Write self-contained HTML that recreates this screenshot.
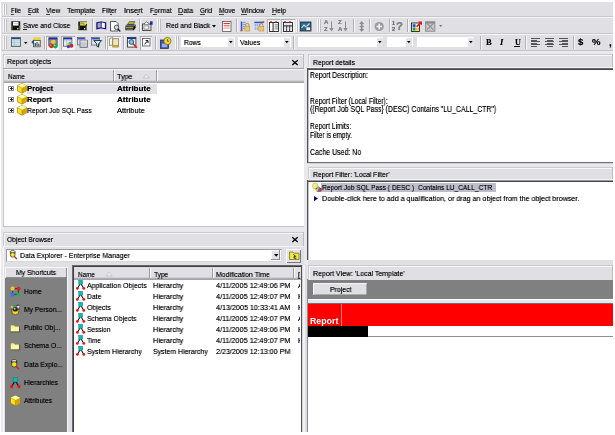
<!DOCTYPE html>
<html><head><meta charset="utf-8"><title>Report Editor</title>
<style>
html,body{margin:0;padding:0;}
body{width:615px;height:435px;overflow:hidden;background:#fff;position:relative;font-family:"Liberation Sans", sans-serif;}
#app{position:absolute;left:0;top:0;width:615px;height:435px;overflow:hidden;}
#app div,#app svg,#app span{position:absolute;}
#app span.t,#app span.u{white-space:pre;will-change:transform;text-shadow:0 0 0.5px rgba(0,0,0,0.6);}
#app svg{overflow:visible;}
</style></head><body><div id="app">
<div style="left:1px;top:2px;width:612px;height:430px;background:#e0dfe3;"></div>
<div style="left:1px;top:51px;width:2px;height:381px;background:#e9e8ed;"></div>
<div style="left:2px;top:16px;width:611px;height:1px;background:#c9c8cc;"></div>
<div style="left:2px;top:17px;width:611px;height:1px;background:#f4f4f6;"></div>
<div style="left:2px;top:33px;width:611px;height:1px;background:#c9c8cc;"></div>
<div style="left:2px;top:34px;width:611px;height:1px;background:#f4f4f6;"></div>
<div style="left:2px;top:50px;width:611px;height:1px;background:#c4c3c7;"></div>
<div style="left:2px;top:51px;width:611px;height:3px;background:#e9e8ed;"></div>
<div style="left:3px;top:4px;width:1px;height:11px;background:#fafafc;"></div>
<div style="left:4px;top:4px;width:1px;height:11px;background:#c0bfc4;"></div>
<div style="left:5px;top:4px;width:1px;height:11px;background:#fafafc;"></div>
<div style="left:6px;top:4px;width:1px;height:11px;background:#c0bfc4;"></div>
<div style="left:3px;top:19px;width:1px;height:13px;background:#fafafc;"></div>
<div style="left:4px;top:19px;width:1px;height:13px;background:#c0bfc4;"></div>
<div style="left:5px;top:19px;width:1px;height:13px;background:#fafafc;"></div>
<div style="left:6px;top:19px;width:1px;height:13px;background:#c0bfc4;"></div>
<div style="left:3px;top:36px;width:1px;height:13px;background:#fafafc;"></div>
<div style="left:4px;top:36px;width:1px;height:13px;background:#c0bfc4;"></div>
<div style="left:5px;top:36px;width:1px;height:13px;background:#fafafc;"></div>
<div style="left:6px;top:36px;width:1px;height:13px;background:#c0bfc4;"></div>
<span class="t" style="left:11px;top:6.00px;font-size:7.5px;line-height:10.5px;color:#000;transform:scaleX(0.8103);transform-origin:0 50%;">File</span>
<span class="t" style="left:28px;top:6.00px;font-size:7.5px;line-height:10.5px;color:#000;transform:scaleX(0.8502);transform-origin:0 50%;">Edit</span>
<span class="t" style="left:46.2px;top:6.00px;font-size:7.5px;line-height:10.5px;color:#000;transform:scaleX(0.8868);transform-origin:0 50%;">View</span>
<span class="t" style="left:67.2px;top:6.00px;font-size:7.5px;line-height:10.5px;color:#000;transform:scaleX(0.9298);transform-origin:0 50%;">Template</span>
<span class="t" style="left:102.2px;top:6.00px;font-size:7.5px;line-height:10.5px;color:#000;transform:scaleX(0.8757);transform-origin:0 50%;">Filter</span>
<span class="t" style="left:124.2px;top:6.00px;font-size:7.5px;line-height:10.5px;color:#000;transform:scaleX(0.9912);transform-origin:0 50%;">Insert</span>
<span class="t" style="left:149.5px;top:6.00px;font-size:7.5px;line-height:10.5px;color:#000;transform:scaleX(0.9173);transform-origin:0 50%;">Format</span>
<span class="t" style="left:178.4px;top:6.00px;font-size:7.5px;line-height:10.5px;color:#000;transform:scaleX(0.9531);transform-origin:0 50%;">Data</span>
<span class="t" style="left:200px;top:6.00px;font-size:7.5px;line-height:10.5px;color:#000;transform:scaleX(0.8467);transform-origin:0 50%;">Grid</span>
<span class="t" style="left:218.8px;top:6.00px;font-size:7.5px;line-height:10.5px;color:#000;transform:scaleX(0.8777);transform-origin:0 50%;">Move</span>
<span class="t" style="left:241.4px;top:6.00px;font-size:7.5px;line-height:10.5px;color:#000;transform:scaleX(0.8843);transform-origin:0 50%;">Window</span>
<span class="t" style="left:271.7px;top:6.00px;font-size:7.5px;line-height:10.5px;color:#000;transform:scaleX(0.9134);transform-origin:0 50%;">Help</span>
<div style="left:11px;top:13.6px;width:3px;height:0.7px;background:#444;"></div>
<div style="left:28px;top:13.6px;width:3.3px;height:0.7px;background:#444;"></div>
<div style="left:46.2px;top:13.6px;width:4px;height:0.7px;background:#444;"></div>
<div style="left:84.5px;top:13.6px;width:1.5px;height:0.7px;background:#444;"></div>
<div style="left:109.5px;top:13.6px;width:2px;height:0.7px;background:#444;"></div>
<div style="left:136.5px;top:13.6px;width:2px;height:0.7px;background:#444;"></div>
<div style="left:153px;top:13.6px;width:3.5px;height:0.7px;background:#444;"></div>
<div style="left:178.4px;top:13.6px;width:4.5px;height:0.7px;background:#444;"></div>
<div style="left:200px;top:13.6px;width:4.5px;height:0.7px;background:#444;"></div>
<div style="left:218.8px;top:13.6px;width:5px;height:0.7px;background:#444;"></div>
<div style="left:241.4px;top:13.6px;width:6px;height:0.7px;background:#444;"></div>
<div style="left:271.7px;top:13.6px;width:4.5px;height:0.7px;background:#444;"></div>
<svg style="left:10.5px;top:21px;" width="9.5" height="9.5" viewBox="0 0 9.5 9.5"><rect x="0.3" y="0.3" width="8.9" height="8.9" fill="#111"/><rect x="0.3" y="4.4" width="1.2" height="4.2" fill="#6a6a20"/><rect x="8" y="4.4" width="1.2" height="4.2" fill="#6a6a20"/><rect x="1.9" y="0.9" width="5.6" height="3.7" fill="#f4f4f8"/><rect x="2.4" y="2.2" width="4.6" height="0.6" fill="#c0c0c8"/><rect x="6.2" y="7" width="1.2" height="1.4" fill="#f0f0f0"/></svg>
<span class="t" style="left:23px;top:21.00px;font-size:7.5px;line-height:10.5px;color:#000;transform:scaleX(0.8932);transform-origin:0 50%;">Save and Close</span>
<div style="left:23px;top:29.4px;width:4px;height:0.8px;background:#222;"></div>
<svg style="left:78px;top:21px;" width="10" height="9.5" viewBox="0 0 10 9.5"><rect x="0.3" y="0.6" width="8.7" height="8.6" fill="#111"/><rect x="0.3" y="4.4" width="1.2" height="4.2" fill="#7a7a20"/><rect x="7.8" y="4.4" width="1.2" height="4.2" fill="#7a7a20"/><rect x="1.9" y="1.1" width="5.4" height="3.5" fill="#c8c858"/><rect x="2.4" y="2.4" width="4.4" height="0.6" fill="#8a8a30"/><rect x="6" y="7" width="1.2" height="1.4" fill="#f0f0f0"/><path d="M6.4 0L7.6 1.4L9.8 0.4L8.6 2.2L10 3.6L8 3L7 4.4L7 2.6L5.4 1.8L7 1.6z" fill="#fff04a"/></svg>
<div style="left:92px;top:19px;width:1px;height:13px;background:#b0afb4;"></div>
<div style="left:93px;top:19px;width:1px;height:13px;background:#f8f8fa;"></div>
<svg style="left:96px;top:21px;" width="10.5" height="9" viewBox="0 0 10.5 9"><path d="M0.3 1.2L4.8 0.5L5.4 0.5L10.2 1.2L10.2 8.4L5.4 7.6L4.8 7.6L0.3 8.4z" fill="#0c0c8c"/><path d="M1.6 2L4.7 1.5V6.6L1.6 7z" fill="#a9a9ad"/><path d="M8.9 2L5.6 1.5V6.6L8.9 7z" fill="#fafaff"/></svg>
<svg style="left:110px;top:20.5px;" width="11" height="11" viewBox="0 0 11 11"><path d="M0.5 0.5h5.5l2 2v7.5h-7.5z" fill="#fff" stroke="#333" stroke-width="0.8"/><circle cx="6.5" cy="6.3" r="2.2" fill="#bfe6ee" stroke="#333" stroke-width="0.8"/><path d="M8 8L10.3 10.5" stroke="#222" stroke-width="1.3"/></svg>
<svg style="left:124.5px;top:21px;" width="11" height="10" viewBox="0 0 11 10"><path d="M2.6 3.4L4.4 0.6H9.8L8.4 3.4z" fill="#b8b838" stroke="#333" stroke-width="0.6"/><path d="M0.4 4.8L2 3.4H10.6L10.6 7L8.8 9.2H0.4z" fill="#161616"/><path d="M0.6 4.9H8.8L10.4 3.6" stroke="#d8d8dc" stroke-width="0.7" fill="none"/><rect x="1" y="6.2" width="7.2" height="1.1" fill="#c8c850"/><rect x="1.4" y="8.2" width="6.4" height="0.8" fill="#808084"/></svg>
<div style="left:138.5px;top:19px;width:1px;height:13px;background:#b0afb4;"></div>
<div style="left:139.5px;top:19px;width:1px;height:13px;background:#f8f8fa;"></div>
<svg style="left:142px;top:21px;" width="11" height="10" viewBox="0 0 11 10"><rect x="0.5" y="3" width="8.5" height="6.5" fill="#d9d9de" stroke="#333" stroke-width="0.8"/><path d="M2 3L4.5 0.8L7.5 3" fill="#fff" stroke="#333" stroke-width="0.7"/><rect x="2" y="5" width="4.8" height="3" fill="#fff" stroke="#555" stroke-width="0.5"/><rect x="8" y="0.3" width="2.6" height="3.4" fill="#1c2ea8"/></svg>
<div style="left:157px;top:19px;width:1px;height:13px;background:#fafafc;"></div>
<div style="left:158px;top:19px;width:1px;height:13px;background:#c0bfc4;"></div>
<div style="left:159px;top:19px;width:1px;height:13px;background:#fafafc;"></div>
<div style="left:160px;top:19px;width:1px;height:13px;background:#c0bfc4;"></div>
<span class="t" style="left:166.3px;top:21.00px;font-size:7.5px;line-height:10.5px;color:#000;transform:scaleX(0.9040);transform-origin:0 50%;">Red and Black</span>
<svg style="left:211.5px;top:24.5px;" width="4" height="3" viewBox="0 0 4 3"><path d="M0 0h4l-2 2.4z" fill="#000"/></svg>
<svg style="left:222px;top:20.5px;" width="9.5" height="11" viewBox="0 0 9.5 11"><rect x="0.5" y="0.5" width="8.5" height="10" fill="#fff" stroke="#55555a" stroke-width="0.8"/><rect x="1.6" y="2" width="6.2" height="1.1" fill="#e03030"/><rect x="1.6" y="4.4" width="6.2" height="0.9" fill="#e03030"/><rect x="1.6" y="6.6" width="6.2" height="0.9" fill="#f08080"/></svg>
<div style="left:235.5px;top:19px;width:1px;height:13px;background:#b0afb4;"></div>
<div style="left:236.5px;top:19px;width:1px;height:13px;background:#f8f8fa;"></div>
<svg style="left:240px;top:20.5px;" width="10.5" height="11" viewBox="0 0 10.5 11"><rect x="0.8" y="0.6" width="1.5" height="9.4" fill="#2a50d0"/><path d="M3 1.4H5.6M3 3.4H5.6M3 5.4H4.6M3 7.4H4.4" stroke="#6a8ae0" stroke-width="0.9"/><rect x="0.6" y="9" width="1.6" height="1.4" fill="#d03030"/><path d="M5.7 5.4V3.9a1.6 1.6 0 0 1 3.2 0V5.4" fill="none" stroke="#a08840" stroke-width="0.9"/><rect x="4.8" y="5.2" width="5" height="4.8" fill="#ecc868" stroke="#a08840" stroke-width="0.5"/></svg>
<svg style="left:254px;top:20.5px;" width="10.5" height="11" viewBox="0 0 10.5 11"><rect x="0.3" y="0.7" width="9.2" height="1.5" fill="#2a50d0"/><path d="M1.2 3V5.4M3.2 3V5.4M5.2 3V4.4M1.2 6.4V8.6M3.2 6.4V8.6" stroke="#6a8ae0" stroke-width="0.9"/><rect x="8.6" y="0.4" width="1.6" height="1.4" fill="#d03030"/><path d="M5.7 5.6V4.3a1.6 1.6 0 0 1 3.2 0V5.6" fill="none" stroke="#a08840" stroke-width="0.9"/><rect x="4.8" y="5.4" width="5" height="4.6" fill="#ecc868" stroke="#a08840" stroke-width="0.5"/></svg>
<div style="left:266.5px;top:19px;width:13.5px;height:13.5px;background:#f2f2f5;box-shadow:inset 0.7px 0.7px 0 #9a9a9f;"></div>
<svg style="left:268.5px;top:20.5px;" width="10" height="11" viewBox="0 0 10 11"><rect x="0.5" y="1.5" width="9" height="9" fill="#fff" stroke="#222" stroke-width="0.9"/><rect x="3.6" y="1.5" width="1" height="9" fill="#222"/><rect x="5.6" y="3.5" width="3.6" height="0.8" fill="#555"/><rect x="5.6" y="5.5" width="3.6" height="0.8" fill="#555"/><rect x="5.6" y="7.5" width="3.6" height="0.8" fill="#555"/><path d="M1 0L3 0L2 1.4zM6 0L8 0L7 1.4z" fill="#d02020"/></svg>
<div style="left:281px;top:19px;width:13.5px;height:13.5px;background:#f2f2f5;box-shadow:inset 0.7px 0.7px 0 #9a9a9f;"></div>
<svg style="left:282.5px;top:20.5px;" width="10" height="11" viewBox="0 0 10 11"><rect x="0.5" y="1.5" width="9" height="9" fill="#e8e8ec" stroke="#222" stroke-width="0.9"/><rect x="0.5" y="4.4" width="9" height="1" fill="#222"/><rect x="3.3" y="4.4" width="0.8" height="6" fill="#222"/><rect x="6.3" y="4.4" width="0.8" height="6" fill="#222"/><path d="M1 0L3 0L2 1.4zM6 0L8 0L7 1.4z" fill="#d02020"/></svg>
<div style="left:296px;top:19px;width:1px;height:13px;background:#fafafc;"></div>
<div style="left:297px;top:19px;width:1px;height:13px;background:#c0bfc4;"></div>
<div style="left:298px;top:19px;width:1px;height:13px;background:#fafafc;"></div>
<div style="left:299px;top:19px;width:1px;height:13px;background:#c0bfc4;"></div>
<svg style="left:300px;top:20.5px;" width="11.5" height="11" viewBox="0 0 11.5 11"><rect x="0.5" y="1" width="10.5" height="9" fill="#2c6a8a" stroke="#223" stroke-width="0.8"/><path d="M1.5 7L4 4L6 6L9.5 2.5" stroke="#bfeaf0" stroke-width="1.1" fill="none"/><rect x="6" y="6" width="4.4" height="3.4" fill="#e8f4ff" stroke="#223" stroke-width="0.5"/></svg>
<div style="left:317px;top:19px;width:1px;height:13px;background:#fafafc;"></div>
<div style="left:318px;top:19px;width:1px;height:13px;background:#c0bfc4;"></div>
<div style="left:319px;top:19px;width:1px;height:13px;background:#fafafc;"></div>
<div style="left:320px;top:19px;width:1px;height:13px;background:#c0bfc4;"></div>
<span class="u" style="left:323.5px;top:19.3px;font-size:6px;line-height:6px;color:#8a8a90;font-weight:bold;">A</span>
<span class="u" style="left:323.5px;top:25.5px;font-size:6px;line-height:6px;color:#8a8a90;font-weight:bold;">Z</span>
<svg style="left:329.0px;top:20.5px;" width="5" height="11" viewBox="0 0 5 11"><path d="M2.5 0.5V8" stroke="#8a8a90" stroke-width="1"/><path d="M0.3 7L4.7 7L2.5 10.5z" fill="#8a8a90"/></svg>
<span class="u" style="left:337.8px;top:19.3px;font-size:6px;line-height:6px;color:#8a8a90;font-weight:bold;">Z</span>
<span class="u" style="left:337.8px;top:25.5px;font-size:6px;line-height:6px;color:#8a8a90;font-weight:bold;">A</span>
<svg style="left:343.3px;top:20.5px;" width="5" height="11" viewBox="0 0 5 11"><path d="M2.5 0.5V8" stroke="#8a8a90" stroke-width="1"/><path d="M0.3 7L4.7 7L2.5 10.5z" fill="#8a8a90"/></svg>
<div style="left:353px;top:19px;width:1px;height:13px;background:#b0afb4;"></div>
<div style="left:354px;top:19px;width:1px;height:13px;background:#f8f8fa;"></div>
<svg style="left:358.5px;top:20.5px;" width="5.5" height="11" viewBox="0 0 5.5 11"><path d="M2.7 0L5.2 3H0.2zM2.7 11L5.2 8H0.2z" fill="#8a8a90"/><rect x="1.9" y="2.5" width="1.6" height="6" fill="#8a8a90"/><rect x="0.6" y="4.9" width="4.2" height="1.2" fill="#8a8a90"/></svg>
<div style="left:369px;top:19px;width:1px;height:13px;background:#b0afb4;"></div>
<div style="left:370px;top:19px;width:1px;height:13px;background:#f8f8fa;"></div>
<svg style="left:374px;top:20.5px;" width="10.5" height="11" viewBox="0 0 10.5 11"><circle cx="5.2" cy="5.5" r="4.6" fill="#9a9aa0"/><rect x="2.4" y="4.7" width="5.6" height="1.6" fill="#f0f0f4"/><rect x="4.4" y="2.7" width="1.6" height="5.6" fill="#f0f0f4"/></svg>
<div style="left:388.5px;top:19px;width:1px;height:13px;background:#b0afb4;"></div>
<div style="left:389.5px;top:19px;width:1px;height:13px;background:#f8f8fa;"></div>
<span class="u" style="left:391.7px;top:19.7px;font-size:5.6px;line-height:6px;color:#77777d;font-weight:bold;">1</span>
<span class="u" style="left:391.7px;top:25.5px;font-size:5.6px;line-height:6px;color:#77777d;font-weight:bold;">2</span>
<span class="u" style="left:395.7px;top:20.0px;font-size:11.5px;line-height:12px;color:#8a8a90;font-weight:bold;">?</span>
<div style="left:406.5px;top:19px;width:1px;height:13px;background:#b0afb4;"></div>
<div style="left:407.5px;top:19px;width:1px;height:13px;background:#f8f8fa;"></div>
<svg style="left:410.5px;top:20.5px;" width="11" height="11" viewBox="0 0 11 11"><rect x="0.5" y="2" width="8" height="8.5" fill="#fff" stroke="#222" stroke-width="0.9"/><rect x="1.6" y="3.2" width="3" height="3" fill="#2a50d0"/><rect x="1.6" y="6.6" width="3" height="3" fill="#18a040"/><rect x="4.8" y="6.6" width="3" height="3" fill="#e8c020"/><path d="M5 5L8.5 1.8L7 0.5H11V4.4L9.8 3.1L6.2 6.2z" fill="#e01818"/></svg>
<svg style="left:425px;top:20.5px;" width="10.5" height="11" viewBox="0 0 10.5 11"><rect x="0.6" y="0.8" width="9.2" height="9.4" fill="#c9c9ce" stroke="#8a8a90" stroke-width="1"/><path d="M2 2.4L8.4 8.6M8.4 2.4L2 8.6" stroke="#8a8a90" stroke-width="1.1"/><rect x="0.6" y="0.8" width="9.2" height="1.8" fill="#8a8a90"/></svg>
<svg style="left:439px;top:25px;" width="3.4" height="2.4" viewBox="0 0 3.4 2.4"><path d="M0 0h3.4l-1.7 2z" fill="#77777c"/></svg>
<svg style="left:10.5px;top:37px;" width="10" height="10" viewBox="0 0 10 10"><rect x="0.5" y="0.5" width="9" height="9" fill="#e4f4f4" stroke="#5a626c" stroke-width="0.9"/><rect x="0.9" y="0.9" width="8.2" height="1.3" fill="#2a3a98"/><path d="M1 3.8H9M1 5.4H9M1 7H9M1 8.4H9" stroke="#8ab4c0" stroke-width="0.6"/><path d="M3.2 2.5V9.2" stroke="#8ab4c0" stroke-width="0.5"/></svg>
<svg style="left:24px;top:41.5px;" width="3.4" height="2.4" viewBox="0 0 3.4 2.4"><path d="M0 0h3.4l-1.7 2z" fill="#000"/></svg>
<svg style="left:31px;top:37px;" width="10.5" height="10.5" viewBox="0 0 10.5 10.5"><path d="M3 0.5L9.5 0.5L10 6L5 10L0.5 6z" fill="#e8d040"/><rect x="2.6" y="3.4" width="6.6" height="6.4" fill="#e8eef8" stroke="#334" stroke-width="0.7"/><rect x="3.6" y="6" width="1.4" height="3" fill="#2a50d0"/><rect x="5.4" y="5" width="1.4" height="4" fill="#18a040"/><rect x="7.2" y="6.6" width="1.2" height="2.4" fill="#d03030"/><path d="M0.3 5L3 2.4V7.6z" fill="#445"/></svg>
<div style="left:44px;top:36px;width:1px;height:13px;background:#b0afb4;"></div>
<div style="left:45px;top:36px;width:1px;height:13px;background:#f8f8fa;"></div>
<div style="left:46px;top:35.5px;width:13px;height:14px;background:#f2f2f5;box-shadow:inset 0.7px 0.7px 0 #9a9a9f;"></div>
<svg style="left:47.5px;top:36.5px;" width="11" height="12" viewBox="0 0 11 12"><rect x="0.8" y="0.8" width="8.4" height="8" fill="#8088b8" stroke="#3a3a5a" stroke-width="0.7"/><rect x="0.8" y="0.8" width="8.4" height="1.6" fill="#1c2ea8"/><circle cx="5.2" cy="5" r="2.3" fill="#f0c820"/><circle cx="3.4" cy="8.8" r="2.4" fill="#d82828"/><circle cx="7.4" cy="9" r="2.4" fill="#20a850"/><circle cx="2.8" cy="8.1" r="0.7" fill="#ffb0b0"/><circle cx="6.8" cy="8.3" r="0.7" fill="#b0ffc8"/></svg>
<div style="left:60.5px;top:35.5px;width:14px;height:14px;background:#f2f2f5;box-shadow:inset 0.7px 0.7px 0 #9a9a9f;"></div>
<svg style="left:62.5px;top:36.5px;" width="11" height="12" viewBox="0 0 11 12"><rect x="0.5" y="0.8" width="8.4" height="8.4" fill="#e8eef4" stroke="#3a3a5a" stroke-width="0.7"/><rect x="0.5" y="0.8" width="8.4" height="1.6" fill="#1c2ea8"/><path d="M1 3.6H8.6M3.4 2.6V9" stroke="#9ab0c8" stroke-width="0.5"/><circle cx="5.2" cy="7.4" r="2" fill="#f0d020"/><circle cx="7" cy="6" r="1.5" fill="#20c0d0"/><circle cx="8.4" cy="8.8" r="2" fill="#e02020"/><circle cx="5.4" cy="9.6" r="1.7" fill="#2840e0"/></svg>
<svg style="left:77px;top:37px;" width="11" height="11" viewBox="0 0 11 11"><rect x="0.5" y="0.5" width="7.4" height="7.4" fill="#dcdce4" stroke="#5a5a6a" stroke-width="0.7"/><rect x="0.9" y="0.9" width="6.6" height="1.5" fill="#3048b8"/><rect x="3" y="3.2" width="7.4" height="7.2" fill="#c8c8d0" stroke="#5a5a6a" stroke-width="0.7"/><rect x="3.4" y="3.6" width="6.6" height="1.2" fill="#e8e8f0"/></svg>
<svg style="left:91px;top:37px;" width="11" height="10.5" viewBox="0 0 11 10.5"><rect x="0.5" y="0.5" width="8" height="7.6" fill="#dcdce4" stroke="#5a5a6a" stroke-width="0.7"/><rect x="0.9" y="0.9" width="7.2" height="1.5" fill="#3048b8"/><path d="M2.8 3.6H10.6L7.6 6.8V10.2L5.8 9.2V6.8z" fill="#e8f4f4" stroke="#0c3a40" stroke-width="1"/></svg>
<div style="left:104.5px;top:36px;width:1px;height:13px;background:#b0afb4;"></div>
<div style="left:105.5px;top:36px;width:1px;height:13px;background:#f8f8fa;"></div>
<div style="left:107px;top:35.5px;width:13.5px;height:14px;background:#f2f2f5;box-shadow:inset 0.7px 0.7px 0 #9a9a9f;"></div>
<svg style="left:109px;top:37px;" width="10" height="10.5" viewBox="0 0 10 10.5"><path d="M0.5 1.6L3.8 0.5V7.6L0.5 8.8z" fill="#f8f8f0" stroke="#7a7440" stroke-width="0.7"/><rect x="3.8" y="1.8" width="5.6" height="8.2" fill="#ece6c8" stroke="#7a6a30" stroke-width="0.7"/><rect x="4.2" y="8" width="4.8" height="1.7" fill="#c8a010"/></svg>
<div style="left:123px;top:36px;width:1px;height:13px;background:#b0afb4;"></div>
<div style="left:124px;top:36px;width:1px;height:13px;background:#f8f8fa;"></div>
<svg style="left:127px;top:36.5px;" width="10.5" height="11.5" viewBox="0 0 10.5 11.5"><rect x="0.5" y="0.5" width="8.4" height="9.6" fill="#f4f4f8" stroke="#223" stroke-width="0.8"/><rect x="0.5" y="0.5" width="8.4" height="1.6" fill="#1c2ea8"/><circle cx="4.4" cy="5" r="2.4" fill="#60d0e0" stroke="#223" stroke-width="0.7"/><path d="M6 6.8L9.8 10.8" stroke="#e01818" stroke-width="1.5"/></svg>
<div style="left:140px;top:35.5px;width:12px;height:14px;background:#f2f2f5;box-shadow:inset 0.7px 0.7px 0 #9a9a9f;"></div>
<svg style="left:142px;top:38px;" width="8.5" height="8.5" viewBox="0 0 8.5 8.5"><rect x="0.5" y="0.5" width="7.5" height="7.5" fill="#fff" stroke="#55555a" stroke-width="0.8"/><path d="M2.4 6.2L5.8 2.8M3.6 2.6H6V5" stroke="#111" stroke-width="1" fill="none"/></svg>
<div style="left:155px;top:36px;width:1px;height:13px;background:#b0afb4;"></div>
<div style="left:156px;top:36px;width:1px;height:13px;background:#f8f8fa;"></div>
<svg style="left:159.5px;top:36.5px;" width="11.5" height="12" viewBox="0 0 11.5 12"><rect x="0.5" y="3" width="8" height="8.4" fill="#3a56c0" stroke="#223" stroke-width="0.7"/><rect x="1.8" y="6.6" width="5.4" height="3.6" fill="#9ab0f0"/><circle cx="7.4" cy="4" r="3.6" fill="#f4d828" stroke="#6a5a10" stroke-width="0.7"/><path d="M7.4 2V4.2H9" stroke="#333" stroke-width="0.7" fill="none"/></svg>
<div style="left:174.5px;top:36px;width:1px;height:13px;background:#fafafc;"></div>
<div style="left:175.5px;top:36px;width:1px;height:13px;background:#c0bfc4;"></div>
<div style="left:176.5px;top:36px;width:1px;height:13px;background:#fafafc;"></div>
<div style="left:177.5px;top:36px;width:1px;height:13px;background:#c0bfc4;"></div>
<div style="left:181px;top:37px;width:53.599999999999994px;height:10px;background:#fff;"></div>
<div style="left:227.79999999999998px;top:37.5px;width:6.4px;height:9px;background:#e4e3e8;"></div>
<svg style="left:229.29999999999998px;top:41px;" width="3.6" height="2.5" viewBox="0 0 3.6 2.5"><path d="M0 0h3.6l-1.8 2.3z" fill="#000"/></svg>
<span class="t" style="left:183.7px;top:38.00px;font-size:7.5px;line-height:10.5px;color:#000;transform:scaleX(0.8953);transform-origin:0 50%;">Rows</span>
<div style="left:238px;top:37px;width:52.60000000000002px;height:10px;background:#fff;"></div>
<div style="left:283.8px;top:37.5px;width:6.4px;height:9px;background:#e4e3e8;"></div>
<svg style="left:285.3px;top:41px;" width="3.6" height="2.5" viewBox="0 0 3.6 2.5"><path d="M0 0h3.6l-1.8 2.3z" fill="#000"/></svg>
<span class="t" style="left:239.8px;top:38.00px;font-size:7.5px;line-height:10.5px;color:#000;transform:scaleX(0.9022);transform-origin:0 50%;">Values</span>
<div style="left:293px;top:36px;width:1px;height:13px;background:#b0afb4;"></div>
<div style="left:294px;top:36px;width:1px;height:13px;background:#f8f8fa;"></div>
<div style="left:298.4px;top:37px;width:84.90000000000003px;height:10px;background:#fff;"></div>
<div style="left:376.5px;top:37.5px;width:6.4px;height:9px;background:#e4e3e8;"></div>
<svg style="left:378.0px;top:41px;" width="3.6" height="2.5" viewBox="0 0 3.6 2.5"><path d="M0 0h3.6l-1.8 2.3z" fill="#000"/></svg>
<div style="left:387px;top:37px;width:25.5px;height:10px;background:#fff;"></div>
<div style="left:405.7px;top:37.5px;width:6.4px;height:9px;background:#e4e3e8;"></div>
<svg style="left:407.2px;top:41px;" width="3.6" height="2.5" viewBox="0 0 3.6 2.5"><path d="M0 0h3.6l-1.8 2.3z" fill="#000"/></svg>
<div style="left:416.7px;top:37px;width:57.80000000000001px;height:10px;background:#fff;"></div>
<div style="left:467.7px;top:37.5px;width:6.4px;height:9px;background:#e4e3e8;"></div>
<svg style="left:469.2px;top:41px;" width="3.6" height="2.5" viewBox="0 0 3.6 2.5"><path d="M0 0h3.6l-1.8 2.3z" fill="#000"/></svg>
<div style="left:479.5px;top:36px;width:1px;height:13px;background:#b0afb4;"></div>
<div style="left:480.5px;top:36px;width:1px;height:13px;background:#f8f8fa;"></div>
<span class="t" style="left:485.7px;top:37.00px;font-size:8.5px;line-height:11.5px;color:#000;font-weight:bold;font-family:'Liberation Serif', serif;">B</span>
<span class="t" style="left:500px;top:37.00px;font-size:8.5px;line-height:11.5px;color:#000;font-weight:bold;font-style:italic;font-family:'Liberation Serif', serif;">I</span>
<span class="t" style="left:514.6px;top:37.00px;font-size:8.2px;line-height:11.2px;color:#000;font-weight:bold;font-family:'Liberation Serif', serif;">U</span>
<div style="left:514.4px;top:46px;width:5.8px;height:0.9px;background:#111;"></div>
<div style="left:524.5px;top:36px;width:1px;height:13px;background:#b0afb4;"></div>
<div style="left:525.5px;top:36px;width:1px;height:13px;background:#f8f8fa;"></div>
<div style="left:530.5px;top:38.0px;width:9px;height:1.15px;background:#55555a;"></div>
<div style="left:530.5px;top:39.5px;width:6px;height:1.15px;background:#55555a;"></div>
<div style="left:530.5px;top:41.0px;width:9px;height:1.15px;background:#55555a;"></div>
<div style="left:530.5px;top:42.5px;width:6px;height:1.15px;background:#55555a;"></div>
<div style="left:530.5px;top:44.0px;width:9px;height:1.15px;background:#55555a;"></div>
<div style="left:530.5px;top:45.5px;width:6px;height:1.15px;background:#55555a;"></div>
<div style="left:545.0px;top:38.0px;width:9px;height:1.15px;background:#55555a;"></div>
<div style="left:546.5px;top:39.5px;width:6px;height:1.15px;background:#55555a;"></div>
<div style="left:545.0px;top:41.0px;width:9px;height:1.15px;background:#55555a;"></div>
<div style="left:546.5px;top:42.5px;width:6px;height:1.15px;background:#55555a;"></div>
<div style="left:545.0px;top:44.0px;width:9px;height:1.15px;background:#55555a;"></div>
<div style="left:546.5px;top:45.5px;width:6px;height:1.15px;background:#55555a;"></div>
<div style="left:559px;top:38.0px;width:9px;height:1.15px;background:#55555a;"></div>
<div style="left:562px;top:39.5px;width:6px;height:1.15px;background:#55555a;"></div>
<div style="left:559px;top:41.0px;width:9px;height:1.15px;background:#55555a;"></div>
<div style="left:562px;top:42.5px;width:6px;height:1.15px;background:#55555a;"></div>
<div style="left:559px;top:44.0px;width:9px;height:1.15px;background:#55555a;"></div>
<div style="left:562px;top:45.5px;width:6px;height:1.15px;background:#55555a;"></div>
<div style="left:572.5px;top:36px;width:1px;height:13px;background:#b0afb4;"></div>
<div style="left:573.5px;top:36px;width:1px;height:13px;background:#f8f8fa;"></div>
<span class="t" style="left:578px;top:36.00px;font-size:9.6px;line-height:12.6px;color:#000;font-weight:bold;">$</span>
<span class="t" style="left:591.5px;top:36.00px;font-size:9.6px;line-height:12.6px;color:#000;font-weight:bold;">%</span>
<span class="t" style="left:608.8px;top:36.00px;font-size:10px;line-height:13px;color:#000;font-weight:bold;">,</span>
<div style="left:304px;top:51px;width:3.5px;height:381px;background:#e9e8ed;"></div>
<div style="left:2px;top:226px;width:302px;height:6px;background:#e9e8ed;"></div>
<div style="left:3px;top:54px;width:301px;height:14px;background:#e0dfe3;"></div>
<div style="left:3px;top:54px;width:301px;height:1px;background:#cbcacf;"></div>
<div style="left:3px;top:54px;width:1px;height:14px;background:#cbcacf;"></div>
<div style="left:4px;top:55px;width:299px;height:1px;background:#f7f7f9;"></div>
<div style="left:4px;top:55px;width:1px;height:13px;background:#f7f7f9;"></div>
<div style="left:303px;top:54px;width:1px;height:14px;background:#bdbcc1;"></div>
<span class="t" style="left:6.5px;top:57.00px;font-size:7.5px;line-height:10.5px;color:#000;transform:scaleX(0.9161);transform-origin:0 50%;">Report objects</span>
<svg style="left:292.4px;top:59.6px;" width="6" height="5.4" viewBox="0 0 6 5.4"><path d="M0.3 0.3L5.7 5.1M5.7 0.3L0.3 5.1" stroke="#000" stroke-width="1.3" fill="none"/></svg>
<div style="left:3px;top:68px;width:301px;height:1px;background:#a3a2a8;"></div>
<div style="left:4px;top:69px;width:300px;height:157px;background:#fff;"></div>
<div style="left:3px;top:69px;width:1px;height:157px;background:#c9c8cd;"></div>
<div style="left:3px;top:226px;width:301px;height:1px;background:#c4c3c8;"></div>
<div style="left:4px;top:69px;width:300px;height:13px;background:#e0dfe3;"></div>
<div style="left:4px;top:69px;width:300px;height:1px;background:#f6f6f8;"></div>
<div style="left:4px;top:80px;width:300px;height:1px;background:#cfced3;"></div>
<div style="left:4px;top:81px;width:300px;height:1px;background:#b9b8bd;"></div>
<div style="left:4px;top:82px;width:300px;height:1px;background:#a3a2a8;"></div>
<div style="left:112.5px;top:70px;width:1px;height:11px;background:#9c9ba1;"></div>
<div style="left:113.5px;top:70px;width:1px;height:11px;background:#fcfcfd;"></div>
<div style="left:156px;top:70px;width:1px;height:11px;background:#9c9ba1;"></div>
<div style="left:157px;top:70px;width:1px;height:11px;background:#fcfcfd;"></div>
<span class="t" style="left:7.8px;top:72.00px;font-size:7.5px;line-height:10.5px;color:#000;transform:scaleX(0.8443);transform-origin:0 50%;">Name</span>
<span class="t" style="left:117px;top:72.00px;font-size:7.5px;line-height:10.5px;color:#000;transform:scaleX(0.9468);transform-origin:0 50%;">Type</span>
<svg style="left:142.6px;top:73.8px;" width="6.5" height="4.2" viewBox="0 0 6.5 4.2"><path d="M0.3 3.9L3.2 0.4L6.2 3.9z" fill="#f4f4f6" stroke="#b0afb5" stroke-width="0.6"/></svg>
<div style="left:26.5px;top:83.5px;width:130px;height:10px;background:#e2e1e7;"></div>
<div style="left:8.2px;top:85.5px;width:5.6px;height:5.6px;background:#fff;border:0.6px solid #8d8d92;box-sizing:border-box;"></div>
<div style="left:9.5px;top:87.95px;width:3px;height:0.8px;background:#222;"></div>
<div style="left:10.6px;top:86.8px;width:0.8px;height:3px;background:#222;"></div>
<svg style="left:16.5px;top:83.3px;" width="10.0" height="10.5" viewBox="0 0 10 10.5"><path d="M5 0.4L9.6 2.6V7.8L5 10.2L0.4 7.8V2.6z" fill="#ffe21a" stroke="#8a6a08" stroke-width="0.6"/><path d="M5 0.4L9.6 2.6L5 4.9L0.4 2.6z" fill="#ffffa8"/><path d="M5 4.9L9.6 2.6V7.8L5 10.2z" fill="#d4a60a"/><path d="M0.4 2.6L5 4.9V10.2" fill="none" stroke="#8a6a08" stroke-width="0.4"/></svg>
<span class="t" style="left:27.3px;top:84.00px;font-size:7.8px;line-height:10.8px;color:#000;transform:scaleX(0.9872);transform-origin:0 50%;font-weight:bold;">Project</span>
<span class="t" style="left:117px;top:84.00px;font-size:7.8px;line-height:10.8px;color:#000;transform:scaleX(1.0374);transform-origin:0 50%;font-weight:bold;">Attribute</span>
<div style="left:8.2px;top:96.55px;width:5.6px;height:5.6px;background:#fff;border:0.6px solid #8d8d92;box-sizing:border-box;"></div>
<div style="left:9.5px;top:99.0px;width:3px;height:0.8px;background:#222;"></div>
<div style="left:10.6px;top:97.85px;width:0.8px;height:3px;background:#222;"></div>
<svg style="left:16.5px;top:94.35px;" width="10.0" height="10.5" viewBox="0 0 10 10.5"><path d="M5 0.4L9.6 2.6V7.8L5 10.2L0.4 7.8V2.6z" fill="#ffe21a" stroke="#8a6a08" stroke-width="0.6"/><path d="M5 0.4L9.6 2.6L5 4.9L0.4 2.6z" fill="#ffffa8"/><path d="M5 4.9L9.6 2.6V7.8L5 10.2z" fill="#d4a60a"/><path d="M0.4 2.6L5 4.9V10.2" fill="none" stroke="#8a6a08" stroke-width="0.4"/></svg>
<span class="t" style="left:27.3px;top:95.00px;font-size:7.8px;line-height:10.8px;color:#000;transform:scaleX(0.9831);transform-origin:0 50%;font-weight:bold;">Report</span>
<span class="t" style="left:117px;top:95.00px;font-size:7.8px;line-height:10.8px;color:#000;transform:scaleX(1.0374);transform-origin:0 50%;font-weight:bold;">Attribute</span>
<div style="left:8.2px;top:107.6px;width:5.6px;height:5.6px;background:#fff;border:0.6px solid #8d8d92;box-sizing:border-box;"></div>
<div style="left:9.5px;top:110.05px;width:3px;height:0.8px;background:#222;"></div>
<div style="left:10.6px;top:108.89999999999999px;width:0.8px;height:3px;background:#222;"></div>
<svg style="left:16.5px;top:105.39999999999999px;" width="10.0" height="10.5" viewBox="0 0 10 10.5"><path d="M5 0.4L9.6 2.6V7.8L5 10.2L0.4 7.8V2.6z" fill="#ffe21a" stroke="#8a6a08" stroke-width="0.6"/><path d="M5 0.4L9.6 2.6L5 4.9L0.4 2.6z" fill="#ffffa8"/><path d="M5 4.9L9.6 2.6V7.8L5 10.2z" fill="#d4a60a"/><path d="M0.4 2.6L5 4.9V10.2" fill="none" stroke="#8a6a08" stroke-width="0.4"/></svg>
<span class="t" style="left:27.3px;top:106.00px;font-size:7.5px;line-height:10.5px;color:#000;transform:scaleX(0.8953);transform-origin:0 50%;">Report Job SQL Pass</span>
<span class="t" style="left:117px;top:106.00px;font-size:7.5px;line-height:10.5px;color:#000;transform:scaleX(0.9915);transform-origin:0 50%;">Attribute</span>
<div style="left:3px;top:232px;width:301px;height:14.5px;background:#e0dfe3;"></div>
<div style="left:3px;top:232px;width:301px;height:1px;background:#cbcacf;"></div>
<div style="left:3px;top:232px;width:1px;height:14.5px;background:#cbcacf;"></div>
<div style="left:4px;top:233px;width:299px;height:1px;background:#f7f7f9;"></div>
<div style="left:4px;top:233px;width:1px;height:13.5px;background:#f7f7f9;"></div>
<div style="left:303px;top:232px;width:1px;height:14.5px;background:#bdbcc1;"></div>
<span class="t" style="left:6.5px;top:235.00px;font-size:7.5px;line-height:10.5px;color:#000;transform:scaleX(0.9009);transform-origin:0 50%;">Object Browser</span>
<svg style="left:292.4px;top:236.8px;" width="6" height="5.4" viewBox="0 0 6 5.4"><path d="M0.3 0.3L5.7 5.1M5.7 0.3L0.3 5.1" stroke="#000" stroke-width="1.3" fill="none"/></svg>
<div style="left:3px;top:245.5px;width:301px;height:1px;background:#f4f4f7;"></div>
<div style="left:3px;top:247px;width:301px;height:185px;background:#e0dfe3;"></div>
<div style="left:3px;top:247px;width:1px;height:185px;background:#fbfbfd;"></div>
<div style="left:5.5px;top:249px;width:276px;height:12.5px;background:#fff;border:1px solid #9a9a9f;border-right-color:#d8d8dc;border-bottom-color:#d8d8dc;box-sizing:border-box;"></div>
<svg style="left:8.5px;top:250.3px;" width="8.8" height="9.600000000000001" viewBox="0 0 11 12"><ellipse cx="4.6" cy="2.2" rx="3" ry="1.6" fill="#f4f4d0" stroke="#222" stroke-width="0.8"/><path d="M1.6 2.2V5M7.6 2.2V5" stroke="#222" stroke-width="0.8"/><circle cx="4.6" cy="6" r="3" fill="#f6e21a" stroke="#333" stroke-width="0.9"/><path d="M6.8 8.2L10 11.4" stroke="#e01818" stroke-width="1.6"/></svg>
<span class="t" style="left:19.5px;top:251.00px;font-size:7.5px;line-height:10.5px;color:#000;transform:scaleX(0.9283);transform-origin:0 50%;">Data Explorer - Enterprise Manager</span>
<div style="left:271px;top:250.3px;width:9.2px;height:10px;background:#e4e3e8;box-shadow:inset -0.8px -0.8px 0 #77777c, inset 0.8px 0.8px 0 #fff;"></div>
<svg style="left:273.5px;top:254px;" width="4.4" height="3" viewBox="0 0 4.4 3"><path d="M0 0h4.4l-2.2 2.8z" fill="#000"/></svg>
<div style="left:286.3px;top:249px;width:14.3px;height:13.5px;background:#e4e3e8;box-shadow:inset 1px 1px 0 #fff, inset -1px -1px 0 #77777c;"></div>
<svg style="left:288.8px;top:250.8px;" width="10.5" height="9" viewBox="0 0 10.5 9"><path d="M0.5 1H4L5 2.2H10V8.5H0.5z" fill="#f0e640" stroke="#6a6420" stroke-width="0.7"/><path d="M4.6 3.4L6.6 5.4H5.2V7.2H7.4" stroke="#111" stroke-width="0.9" fill="none"/></svg>
<div style="left:5px;top:266.5px;width:61.5px;height:165.5px;background:#808080;"></div>
<div style="left:5px;top:266.5px;width:61.5px;height:11.5px;background:#e0dfe3;box-shadow:inset 0.8px 0.8px 0 #fff, inset -0.8px -0.8px 0 #77777c;"></div>
<span class="t" style="left:16px;top:268.00px;font-size:7.5px;line-height:10.5px;color:#000;transform:scaleX(0.9140);transform-origin:0 50%;">My Shortcuts</span>
<div style="left:66.5px;top:266px;width:1.5px;height:166px;background:#f8f8fa;"></div>
<svg style="left:10.3px;top:285.8px;" width="11" height="11" viewBox="0 0 11 11"><path d="M2.6 2.6H8.4V8.4H2.6z" fill="none" stroke="#223" stroke-width="0.9"/><circle cx="2.6" cy="2.6" r="2.1" fill="#f0c828"/><circle cx="8.6" cy="2.8" r="2" fill="#e02020"/><circle cx="2.6" cy="8.6" r="2.1" fill="#2a78e8"/><circle cx="8.6" cy="8.6" r="2" fill="#28b048"/></svg>
<span class="t" style="left:24px;top:287.00px;font-size:7.5px;line-height:10.5px;color:#000;transform:scaleX(0.8843);transform-origin:0 50%;">Home</span>
<svg style="left:10.3px;top:304.02px;" width="11.5" height="11.5" viewBox="0 0 11.5 11.5"><path d="M1.6 4.6L3.4 6.8L5.2 5.6L7.4 6.8L9.2 4.4L8.4 9.6Q5.4 12 2.4 9.6z" fill="#f4d81c" stroke="#3a3410" stroke-width="0.6"/><circle cx="5.4" cy="5.4" r="2.2" fill="#1a1a1a"/><circle cx="4.8" cy="4.8" r="0.9" fill="#d8d8e0"/><circle cx="8.2" cy="2.6" r="1.6" fill="#e8e8f0" stroke="#334" stroke-width="0.5"/><circle cx="5" cy="1.8" r="1.3" fill="#30a848"/><circle cx="1.8" cy="3" r="1.2" fill="#e8c020"/><path d="M6 1.6L9.6 1.2" stroke="#223" stroke-width="0.7"/></svg>
<span class="t" style="left:24px;top:305.00px;font-size:7.5px;line-height:10.5px;color:#000;transform:scaleX(0.9024);transform-origin:0 50%;">My Person...</span>
<svg style="left:10.3px;top:323.64px;" width="10.5" height="8.6" viewBox="0 0 10.5 8.6"><path d="M0.6 1H3.8L4.8 2.2H9.4V7.8H0.6z" fill="#f4ee9a" stroke="#8a8440" stroke-width="0.6"/><path d="M0.6 7.9H9.6V2.4" fill="none" stroke="#4a4620" stroke-width="0.8"/><rect x="1" y="3.2" width="7.8" height="4" fill="#faf6b0"/></svg>
<span class="t" style="left:24px;top:323.00px;font-size:7.5px;line-height:10.5px;color:#000;transform:scaleX(0.9002);transform-origin:0 50%;">Public Obj...</span>
<svg style="left:10.3px;top:341.86px;" width="10.5" height="8.6" viewBox="0 0 10.5 8.6"><path d="M0.6 1H3.8L4.8 2.2H9.4V7.8H0.6z" fill="#f4ee9a" stroke="#8a8440" stroke-width="0.6"/><path d="M0.6 7.9H9.6V2.4" fill="none" stroke="#4a4620" stroke-width="0.8"/><rect x="1" y="3.2" width="7.8" height="4" fill="#faf6b0"/></svg>
<span class="t" style="left:24px;top:341.00px;font-size:7.5px;line-height:10.5px;color:#000;transform:scaleX(0.9115);transform-origin:0 50%;">Schema O...</span>
<svg style="left:10.3px;top:358.68px;" width="9.9" height="10.8" viewBox="0 0 11 12"><ellipse cx="4.6" cy="2.2" rx="3" ry="1.6" fill="#f4f4d0" stroke="#222" stroke-width="0.8"/><path d="M1.6 2.2V5M7.6 2.2V5" stroke="#222" stroke-width="0.8"/><circle cx="4.6" cy="6" r="3" fill="#f6e21a" stroke="#333" stroke-width="0.9"/><path d="M6.8 8.2L10 11.4" stroke="#e01818" stroke-width="1.6"/></svg>
<span class="t" style="left:24px;top:360.00px;font-size:7.5px;line-height:10.5px;color:#000;transform:scaleX(0.9080);transform-origin:0 50%;">Data Explo...</span>
<svg style="left:10.3px;top:377.4px;" width="10.5" height="11.55" viewBox="0 0 10 11"><path d="M4.4 4.4L1.6 9M5.6 4.4L8.4 9" stroke="#111" stroke-width="1.1"/><rect x="3" y="0.3" width="4.2" height="4.4" fill="#18b4b4" stroke="#0a7a80" stroke-width="0.5"/><circle cx="1.5" cy="9.2" r="1.5" fill="#f01010"/><circle cx="8.5" cy="9.2" r="1.5" fill="#f01010"/></svg>
<span class="t" style="left:24px;top:378.00px;font-size:7.5px;line-height:10.5px;color:#000;transform:scaleX(0.8909);transform-origin:0 50%;">Hierarchies</span>
<svg style="left:10.3px;top:395.12px;" width="10.5" height="11.025" viewBox="0 0 10 10.5"><path d="M5 0.4L9.6 2.6V7.8L5 10.2L0.4 7.8V2.6z" fill="#ffe21a" stroke="#8a6a08" stroke-width="0.6"/><path d="M5 0.4L9.6 2.6L5 4.9L0.4 2.6z" fill="#ffffa8"/><path d="M5 4.9L9.6 2.6V7.8L5 10.2z" fill="#d4a60a"/><path d="M0.4 2.6L5 4.9V10.2" fill="none" stroke="#8a6a08" stroke-width="0.4"/></svg>
<span class="t" style="left:24px;top:396.00px;font-size:7.5px;line-height:10.5px;color:#000;transform:scaleX(0.8836);transform-origin:0 50%;">Attributes</span>
<div style="left:72px;top:265px;width:230.5px;height:167px;background:#fff;"></div>
<div style="left:72px;top:265px;width:230px;height:1px;background:#6a6a6e;"></div>
<div style="left:72px;top:266px;width:229px;height:1px;background:#3e3e42;"></div>
<div style="left:72px;top:265px;width:1px;height:167px;background:#6a6a6e;"></div>
<div style="left:73px;top:266px;width:1px;height:166px;background:#3e3e42;"></div>
<div style="left:301px;top:265px;width:1px;height:167px;background:#505055;"></div>
<div style="left:302px;top:265px;width:1.3px;height:167px;background:#d6d6db;"></div>
<div style="left:74px;top:267px;width:227px;height:12px;background:#e0dfe3;"></div>
<div style="left:74px;top:277px;width:227px;height:1px;background:#cfced3;"></div>
<div style="left:74px;top:278px;width:227px;height:1px;background:#b0afb5;"></div>
<div style="left:74px;top:279px;width:227px;height:1px;background:#a3a2a8;"></div>
<div style="left:148.5px;top:268px;width:1px;height:10px;background:#9c9ba1;"></div>
<div style="left:149.5px;top:268px;width:1px;height:10px;background:#fcfcfd;"></div>
<div style="left:211.5px;top:268px;width:1px;height:10px;background:#9c9ba1;"></div>
<div style="left:212.5px;top:268px;width:1px;height:10px;background:#fcfcfd;"></div>
<div style="left:293.3px;top:268px;width:1px;height:10px;background:#9c9ba1;"></div>
<div style="left:294.3px;top:268px;width:1px;height:10px;background:#fcfcfd;"></div>
<span class="t" style="left:78px;top:270.00px;font-size:7.5px;line-height:10.5px;color:#000;transform:scaleX(0.8493);transform-origin:0 50%;">Name</span>
<svg style="left:105.5px;top:271.5px;" width="6.5" height="4.2" viewBox="0 0 6.5 4.2"><path d="M0.3 3.9L3.2 0.4L6.2 3.9z" fill="#f4f4f6" stroke="#b0afb5" stroke-width="0.6"/></svg>
<span class="t" style="left:154px;top:270.00px;font-size:7.5px;line-height:10.5px;color:#000;transform:scaleX(0.8730);transform-origin:0 50%;">Type</span>
<span class="t" style="left:215.6px;top:270.00px;font-size:7.5px;line-height:10.5px;color:#000;transform:scaleX(0.9202);transform-origin:0 50%;">Modification Time</span>
<span class="t" style="left:297.5px;top:270.00px;font-size:7.5px;line-height:10.5px;color:#000;">[</span>
<svg style="left:76.3px;top:280.09999999999997px;" width="9.200000000000001" height="10.120000000000001" viewBox="0 0 10 11"><path d="M4.4 4.4L1.6 9M5.6 4.4L8.4 9" stroke="#111" stroke-width="1.1"/><rect x="3" y="0.3" width="4.2" height="4.4" fill="#18b4b4" stroke="#0a7a80" stroke-width="0.5"/><circle cx="1.5" cy="9.2" r="1.5" fill="#f01010"/><circle cx="8.5" cy="9.2" r="1.5" fill="#f01010"/></svg>
<span class="t" style="left:87.3px;top:281.00px;font-size:7.5px;line-height:10.5px;color:#000;transform:scaleX(0.9299);transform-origin:0 50%;">Application Objects</span>
<span class="t" style="left:153px;top:281.00px;font-size:7.5px;line-height:10.5px;color:#000;transform:scaleX(0.9441);transform-origin:0 50%;">Hierarchy</span>
<span class="t" style="left:215.6px;top:281.00px;font-size:7.5px;line-height:10.5px;color:#000;transform:scaleX(0.9610);transform-origin:0 50%;">4/11/2005 12:49:06 PM</span>
<div style="left:297.8px;top:280.7px;width:2.2px;height:10px;overflow:hidden;"><span class="u" style="left:0;top:0;font-size:7.5px;line-height:10px;">A</span></div>
<svg style="left:76.3px;top:291.09999999999997px;" width="9.200000000000001" height="10.120000000000001" viewBox="0 0 10 11"><path d="M4.4 4.4L1.6 9M5.6 4.4L8.4 9" stroke="#111" stroke-width="1.1"/><rect x="3" y="0.3" width="4.2" height="4.4" fill="#18b4b4" stroke="#0a7a80" stroke-width="0.5"/><circle cx="1.5" cy="9.2" r="1.5" fill="#f01010"/><circle cx="8.5" cy="9.2" r="1.5" fill="#f01010"/></svg>
<span class="t" style="left:87.3px;top:292.00px;font-size:7.5px;line-height:10.5px;color:#000;transform:scaleX(0.9026);transform-origin:0 50%;">Date</span>
<span class="t" style="left:153px;top:292.00px;font-size:7.5px;line-height:10.5px;color:#000;transform:scaleX(0.9441);transform-origin:0 50%;">Hierarchy</span>
<span class="t" style="left:215.6px;top:292.00px;font-size:7.5px;line-height:10.5px;color:#000;transform:scaleX(0.9610);transform-origin:0 50%;">4/11/2005 12:49:07 PM</span>
<div style="left:297.8px;top:291.7px;width:2.2px;height:10px;overflow:hidden;"><span class="u" style="left:0;top:0;font-size:7.5px;line-height:10px;">H</span></div>
<svg style="left:76.3px;top:302.09999999999997px;" width="9.200000000000001" height="10.120000000000001" viewBox="0 0 10 11"><path d="M4.4 4.4L1.6 9M5.6 4.4L8.4 9" stroke="#111" stroke-width="1.1"/><rect x="3" y="0.3" width="4.2" height="4.4" fill="#18b4b4" stroke="#0a7a80" stroke-width="0.5"/><circle cx="1.5" cy="9.2" r="1.5" fill="#f01010"/><circle cx="8.5" cy="9.2" r="1.5" fill="#f01010"/></svg>
<span class="t" style="left:87.3px;top:303.00px;font-size:7.5px;line-height:10.5px;color:#000;transform:scaleX(0.9396);transform-origin:0 50%;">Objects</span>
<span class="t" style="left:153px;top:303.00px;font-size:7.5px;line-height:10.5px;color:#000;transform:scaleX(0.9441);transform-origin:0 50%;">Hierarchy</span>
<span class="t" style="left:215.6px;top:303.00px;font-size:7.5px;line-height:10.5px;color:#000;transform:scaleX(0.9590);transform-origin:0 50%;">4/13/2005 10:33:41 AM</span>
<div style="left:297.8px;top:302.7px;width:2.2px;height:10px;overflow:hidden;"><span class="u" style="left:0;top:0;font-size:7.5px;line-height:10px;">H</span></div>
<svg style="left:76.3px;top:313.09999999999997px;" width="9.200000000000001" height="10.120000000000001" viewBox="0 0 10 11"><path d="M4.4 4.4L1.6 9M5.6 4.4L8.4 9" stroke="#111" stroke-width="1.1"/><rect x="3" y="0.3" width="4.2" height="4.4" fill="#18b4b4" stroke="#0a7a80" stroke-width="0.5"/><circle cx="1.5" cy="9.2" r="1.5" fill="#f01010"/><circle cx="8.5" cy="9.2" r="1.5" fill="#f01010"/></svg>
<span class="t" style="left:87.3px;top:314.00px;font-size:7.5px;line-height:10.5px;color:#000;transform:scaleX(0.8977);transform-origin:0 50%;">Schema Objects</span>
<span class="t" style="left:153px;top:314.00px;font-size:7.5px;line-height:10.5px;color:#000;transform:scaleX(0.9441);transform-origin:0 50%;">Hierarchy</span>
<span class="t" style="left:215.6px;top:314.00px;font-size:7.5px;line-height:10.5px;color:#000;transform:scaleX(0.9610);transform-origin:0 50%;">4/11/2005 12:49:07 PM</span>
<div style="left:297.8px;top:313.7px;width:2.2px;height:10px;overflow:hidden;"><span class="u" style="left:0;top:0;font-size:7.5px;line-height:10px;">A</span></div>
<svg style="left:76.3px;top:324.09999999999997px;" width="9.200000000000001" height="10.120000000000001" viewBox="0 0 10 11"><path d="M4.4 4.4L1.6 9M5.6 4.4L8.4 9" stroke="#111" stroke-width="1.1"/><rect x="3" y="0.3" width="4.2" height="4.4" fill="#18b4b4" stroke="#0a7a80" stroke-width="0.5"/><circle cx="1.5" cy="9.2" r="1.5" fill="#f01010"/><circle cx="8.5" cy="9.2" r="1.5" fill="#f01010"/></svg>
<span class="t" style="left:87.3px;top:325.00px;font-size:7.5px;line-height:10.5px;color:#000;transform:scaleX(0.8768);transform-origin:0 50%;">Session</span>
<span class="t" style="left:153px;top:325.00px;font-size:7.5px;line-height:10.5px;color:#000;transform:scaleX(0.9441);transform-origin:0 50%;">Hierarchy</span>
<span class="t" style="left:215.6px;top:325.00px;font-size:7.5px;line-height:10.5px;color:#000;transform:scaleX(0.9610);transform-origin:0 50%;">4/11/2005 12:49:06 PM</span>
<div style="left:297.8px;top:324.7px;width:2.2px;height:10px;overflow:hidden;"><span class="u" style="left:0;top:0;font-size:7.5px;line-height:10px;">H</span></div>
<svg style="left:76.3px;top:335.09999999999997px;" width="9.200000000000001" height="10.120000000000001" viewBox="0 0 10 11"><path d="M4.4 4.4L1.6 9M5.6 4.4L8.4 9" stroke="#111" stroke-width="1.1"/><rect x="3" y="0.3" width="4.2" height="4.4" fill="#18b4b4" stroke="#0a7a80" stroke-width="0.5"/><circle cx="1.5" cy="9.2" r="1.5" fill="#f01010"/><circle cx="8.5" cy="9.2" r="1.5" fill="#f01010"/></svg>
<span class="t" style="left:87.3px;top:336.00px;font-size:7.5px;line-height:10.5px;color:#000;transform:scaleX(0.8358);transform-origin:0 50%;">Time</span>
<span class="t" style="left:153px;top:336.00px;font-size:7.5px;line-height:10.5px;color:#000;transform:scaleX(0.9441);transform-origin:0 50%;">Hierarchy</span>
<span class="t" style="left:215.6px;top:336.00px;font-size:7.5px;line-height:10.5px;color:#000;transform:scaleX(0.9610);transform-origin:0 50%;">4/11/2005 12:49:07 PM</span>
<div style="left:297.8px;top:335.7px;width:2.2px;height:10px;overflow:hidden;"><span class="u" style="left:0;top:0;font-size:7.5px;line-height:10px;">H</span></div>
<svg style="left:76.3px;top:346.09999999999997px;" width="9.200000000000001" height="10.120000000000001" viewBox="0 0 10 11"><path d="M4.4 4.4L1.6 9M5.6 4.4L8.4 9" stroke="#111" stroke-width="1.1"/><rect x="3" y="0.3" width="4.2" height="4.4" fill="#18b4b4" stroke="#0a7a80" stroke-width="0.5"/><circle cx="1.5" cy="9.2" r="1.5" fill="#f01010"/><circle cx="8.5" cy="9.2" r="1.5" fill="#f01010"/></svg>
<span class="t" style="left:87.3px;top:347.00px;font-size:7.5px;line-height:10.5px;color:#000;transform:scaleX(0.9242);transform-origin:0 50%;">System Hierarchy</span>
<span class="t" style="left:153px;top:347.00px;font-size:7.5px;line-height:10.5px;color:#000;transform:scaleX(0.9242);transform-origin:0 50%;">System Hierarchy</span>
<span class="t" style="left:215.6px;top:347.00px;font-size:7.5px;line-height:10.5px;color:#000;transform:scaleX(0.9540);transform-origin:0 50%;">2/23/2009 12:13:00 PM</span>
<div style="left:308px;top:54px;width:305px;height:14px;background:#e0dfe3;"></div>
<div style="left:308px;top:54px;width:305px;height:1px;background:#cbcacf;"></div>
<div style="left:308px;top:54px;width:1px;height:14px;background:#cbcacf;"></div>
<div style="left:309px;top:55px;width:303px;height:1px;background:#f7f7f9;"></div>
<div style="left:309px;top:55px;width:1px;height:13px;background:#f7f7f9;"></div>
<div style="left:612px;top:54px;width:1px;height:14px;background:#bdbcc1;"></div>
<span class="t" style="left:313.2px;top:58.00px;font-size:7.5px;line-height:10.5px;color:#000;transform:scaleX(0.9075);transform-origin:0 50%;">Report details</span>
<div style="left:308px;top:68px;width:305px;height:95px;background:#fff;"></div>
<div style="left:308px;top:67px;width:305px;height:1px;background:#f2f2f5;"></div>
<div style="left:308px;top:68px;width:305px;height:1px;background:#6a6a6e;"></div>
<div style="left:308px;top:69px;width:305px;height:1px;background:#48484c;"></div>
<div style="left:307px;top:68px;width:1px;height:95px;background:#505055;"></div>
<div style="left:308px;top:70px;width:1px;height:92px;background:#c4c4c8;"></div>
<div style="left:308px;top:162px;width:305px;height:1px;background:#6e6e72;"></div>
<div style="left:308px;top:163px;width:305px;height:1px;background:#d4d4d9;"></div>
<span class="t" style="left:310px;top:70.00px;font-size:8.2px;line-height:11.2px;color:#000;transform:scaleX(0.8291);transform-origin:0 50%;">Report Description:</span>
<span class="t" style="left:310px;top:96.00px;font-size:8.2px;line-height:11.2px;color:#000;transform:scaleX(0.8171);transform-origin:0 50%;">Report Filter (Local Filter):</span>
<span class="t" style="left:310px;top:104.00px;font-size:8.2px;line-height:11.2px;color:#000;transform:scaleX(0.8470);transform-origin:0 50%;">({Report Job SQL Pass} (DESC) Contains "LU_CALL_CTR")</span>
<span class="t" style="left:310px;top:121.00px;font-size:8.2px;line-height:11.2px;color:#000;transform:scaleX(0.8116);transform-origin:0 50%;">Report Limits:</span>
<span class="t" style="left:310px;top:130.00px;font-size:8.2px;line-height:11.2px;color:#000;transform:scaleX(0.7962);transform-origin:0 50%;">Filter is empty.</span>
<span class="t" style="left:310px;top:147.00px;font-size:8.2px;line-height:11.2px;color:#000;transform:scaleX(0.8522);transform-origin:0 50%;">Cache Used: No</span>
<div style="left:308px;top:164px;width:305px;height:2.5px;background:#e9e8ed;"></div>
<div style="left:308px;top:166.5px;width:305px;height:13.5px;background:#e0dfe3;"></div>
<div style="left:308px;top:166.5px;width:305px;height:1px;background:#cbcacf;"></div>
<div style="left:308px;top:166.5px;width:1px;height:13.5px;background:#cbcacf;"></div>
<div style="left:309px;top:167.5px;width:303px;height:1px;background:#f7f7f9;"></div>
<div style="left:309px;top:167.5px;width:1px;height:12.5px;background:#f7f7f9;"></div>
<div style="left:612px;top:166.5px;width:1px;height:13.5px;background:#bdbcc1;"></div>
<span class="t" style="left:313.2px;top:170.00px;font-size:7.5px;line-height:10.5px;color:#000;transform:scaleX(0.9002);transform-origin:0 50%;">Report Filter: 'Local Filter'</span>
<div style="left:308px;top:180px;width:305px;height:82px;background:#fff;"></div>
<div style="left:308px;top:179px;width:305px;height:1px;background:#f2f2f5;"></div>
<div style="left:308px;top:180px;width:305px;height:1px;background:#9a9a9e;"></div>
<div style="left:308px;top:181px;width:305px;height:1px;background:#48484c;"></div>
<div style="left:307px;top:180px;width:1px;height:80.4px;background:#505055;"></div>
<div style="left:308px;top:182px;width:1px;height:78.4px;background:#c4c4c8;"></div>
<div style="left:308px;top:260.4px;width:305px;height:2.6px;background:#e0dfe3;"></div>
<div style="left:321.3px;top:183.4px;width:174.7px;height:9px;background:#bdbdcb;"></div>
<svg style="left:311.5px;top:183.3px;" width="10.5" height="9.5" viewBox="0 0 10.5 9.5"><circle cx="3.2" cy="3" r="2.9" fill="#f6e470" stroke="#c8b040" stroke-width="0.5"/><circle cx="2.6" cy="2.4" r="1" fill="#fffbd0"/><path d="M3.4 6L6 3.4L9.6 5.6L9 8.4L5 8.8z" fill="#2a2a30"/><circle cx="6.3" cy="5.2" r="1.5" fill="#30c8e8"/><circle cx="8.2" cy="6.8" r="1.5" fill="#e82040"/><circle cx="5" cy="7.2" r="1.4" fill="#d8d820"/><circle cx="6.6" cy="7.6" r="1" fill="#c040c0"/></svg>
<span class="t" style="left:321.8px;top:183.00px;font-size:7.5px;line-height:10.5px;color:#000;transform:scaleX(0.8850);transform-origin:0 50%;">Report Job SQL Pass ( DESC )  Contains LU_CALL_CTR</span>
<svg style="left:314px;top:195.5px;" width="4.2" height="5.2" viewBox="0 0 4.2 5.2"><path d="M0 0L4 2.6L0 5.2z" fill="#00008a"/></svg>
<span class="t" style="left:322px;top:194.00px;font-size:7.5px;line-height:10.5px;color:#000;transform:scaleX(0.9477);transform-origin:0 50%;">Double-click here to add a qualification, or drag an object from the object browser.</span>
<div style="left:308px;top:263px;width:305px;height:3px;background:#e0dfe3;"></div>
<div style="left:308px;top:265px;width:305px;height:14.5px;background:#e0dfe3;"></div>
<div style="left:308px;top:265px;width:305px;height:1px;background:#cbcacf;"></div>
<div style="left:308px;top:265px;width:1px;height:14.5px;background:#cbcacf;"></div>
<div style="left:309px;top:266px;width:303px;height:1px;background:#f7f7f9;"></div>
<div style="left:309px;top:266px;width:1px;height:13.5px;background:#f7f7f9;"></div>
<div style="left:612px;top:265px;width:1px;height:14.5px;background:#bdbcc1;"></div>
<span class="t" style="left:313.2px;top:269.00px;font-size:7.5px;line-height:10.5px;color:#000;transform:scaleX(0.9341);transform-origin:0 50%;">Report View: 'Local Template'</span>
<div style="left:308px;top:279.5px;width:305px;height:19.3px;background:#808080;"></div>
<div style="left:312.7px;top:283.3px;width:54.7px;height:11.5px;background:#e0dfe3;box-shadow:inset 0.8px 0.8px 0 #fff, inset -0.8px -0.8px 0 #9a9a9f;"></div>
<span class="t" style="left:329.9px;top:285.00px;font-size:7.5px;line-height:10.5px;color:#000;transform:scaleX(0.9210);transform-origin:0 50%;">Project</span>
<div style="left:308px;top:299px;width:305px;height:133px;background:#fff;"></div>
<div style="left:303.3px;top:265px;width:1.7px;height:167px;background:#f2f2f5;"></div>
<div style="left:305px;top:265px;width:2px;height:167px;background:#dddde2;"></div>
<div style="left:307px;top:279px;width:1px;height:153px;background:#8e8e92;"></div>
<div style="left:308px;top:300.4px;width:305px;height:2.2px;background:#e6e6ee;"></div>
<div style="left:308px;top:302.7px;width:305px;height:1px;background:#707074;"></div>
<div style="left:308.4px;top:303.8px;width:304.6px;height:21.8px;background:#fe0000;"></div>
<div style="left:341px;top:304px;width:1px;height:21.5px;background:#ff7d7d;"></div>
<div style="left:308.4px;top:325.5px;width:59.5px;height:11px;background:#000;"></div>
<div style="left:368px;top:336px;width:245px;height:1px;background:#909094;"></div>
<span class="t" style="left:310px;top:316.00px;font-size:8.8px;line-height:11.8px;color:#fff;transform:scaleX(0.9873);transform-origin:0 50%;font-weight:bold;text-shadow:none;">Report</span>
<div style="left:0px;top:0px;width:615px;height:2px;background:#fff;"></div>
<div style="left:0px;top:432px;width:615px;height:3px;background:#fff;"></div>
<div style="left:0px;top:0px;width:1.2px;height:435px;background:#fff;"></div>
<div style="left:613px;top:0px;width:2px;height:435px;background:#fff;"></div>
</div></body></html>
